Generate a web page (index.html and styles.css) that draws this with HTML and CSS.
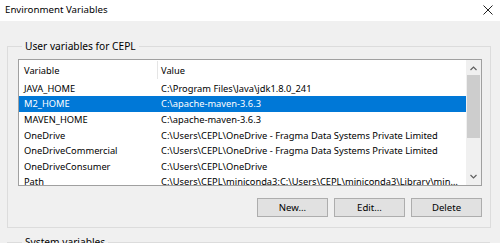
FILE: index.html
```html
<!DOCTYPE html>
<html>
<head>
<meta charset="utf-8">
<link rel="stylesheet" href="styles.css">
</head>
<body>
<div class="window">
  <div class="titlebar">
    <span class="title">Environment Variables</span>
    <svg class="close" width="10" height="10" viewBox="0 0 10 10"><path d="M0.5 0.5 L9.5 9.5 M9.5 0.5 L0.5 9.5" stroke="#222" stroke-width="1" fill="none"/></svg>
  </div>
  <div class="content">
    <fieldset class="group">
      <legend class="legend">User variables for CEPL</legend>
      <div class="listbox">
        <div class="list">
          <div class="row header"><span class="c1">Variable</span><span class="c2">Value</span></div>
          <div class="row"><span class="c1">JAVA_HOME</span><span class="c2">C:\Program Files\Java\jdk1.8.0_241</span></div>
          <div class="row selected"><span class="c1">M2_HOME</span><span class="c2">C:\apache-maven-3.6.3</span></div>
          <div class="row"><span class="c1">MAVEN_HOME</span><span class="c2">C:\apache-maven-3.6.3</span></div>
          <div class="row"><span class="c1">OneDrive</span><span class="c2">C:\Users\CEPL\OneDrive - Fragma Data Systems Private Limited</span></div>
          <div class="row"><span class="c1">OneDriveCommercial</span><span class="c2">C:\Users\CEPL\OneDrive - Fragma Data Systems Private Limited</span></div>
          <div class="row"><span class="c1">OneDriveConsumer</span><span class="c2">C:\Users\CEPL\OneDrive</span></div>
          <div class="row"><span class="c1">Path</span><span class="c2">C:\Users\CEPL\miniconda3;C:\Users\CEPL\miniconda3\Library\mingw-w64\bin</span></div>
        </div>
        <div class="scrollbar">
          <svg class="arrow" width="7" height="5" viewBox="0 0 7 5"><path d="M0.5 4 L3.5 1 L6.5 4" stroke="#606060" stroke-width="1.2" fill="none"/></svg>
          <div class="track"><div class="thumb"></div></div>
          <svg class="arrow" width="7" height="5" viewBox="0 0 7 5"><path d="M0.5 1 L3.5 4 L6.5 1" stroke="#606060" stroke-width="1.2" fill="none"/></svg>
        </div>
      </div>
      <div class="buttons">
        <button class="btn">New...</button>
        <button class="btn">Edit...</button>
        <button class="btn">Delete</button>
      </div>
    </fieldset>
    <fieldset class="group system">
      <legend class="legend">System variables</legend>
    </fieldset>
  </div>
</div>
</body>
</html>
```
FILE: styles.css
```css
* { box-sizing: border-box; }
html, body { margin: 0; padding: 0; }
body {
  width: 500px;
  height: 243px;
  overflow: hidden;
  background: #f0f0f0;
  font-family: "Noto Sans", "Open Sans", sans-serif;
  font-size: 9.3px;
  color: #000;
}
.window { width: 500px; height: 243px; overflow: hidden; }
.titlebar {
  height: 21px;
  background: #fff;
  display: flex;
  align-items: center;
  justify-content: space-between;
  padding: 0 7px 3px 5px;
}
.title { font-size: 9.7px; color: #000; }
.close { display: block; margin-top: 1px; }
.content { padding: 19px 10px 0 7px; }
.group {
  margin: 0;
  padding: 6px 8px 0 10px;
  border: 1px solid #dcdcdc;
  height: 188px;
  width: 483px;
}
.legend {
  padding: 0 3px;
  margin-left: 4px;
  font-size: 10.2px;
  line-height: 13px;
}
.listbox {
  width: 464px;
  height: 127px;
  border: 1px solid #a0a0a0;
  background: #fff;
  display: flex;
}
.list { flex: 1; overflow: hidden; min-width: 0; }
.row {
  display: flex;
  height: 15.6px;
  align-items: center;
  white-space: nowrap;
}
.row.header { height: 20.5px; }
.c1 { width: 138px; padding-left: 5px; flex: none; }
.c2 {
  flex: 1;
  min-width: 0;
  padding-left: 4px;
  padding-right: 8px;
  overflow: hidden;
  text-overflow: ellipsis;
}
.header .c2 { border-left: 1px solid #e5e5e5; padding-left: 3px; height: 18px; display: flex; align-items: center; }
.row.selected { background: #0078d7; color: #fff; }
.scrollbar {
  width: 15px;
  flex: none;
  background: #f0f0f0;
  display: flex;
  flex-direction: column;
  align-items: center;
  padding: 6px 0 6px;
}
.arrow { display: block; flex: none; }
.track { flex: 1; width: 100%; padding: 4px 1px; }
.thumb { width: 100%; height: 63px; background: #cdcdcd; }
.buttons {
  display: flex;
  justify-content: flex-end;
  gap: 6px;
  width: 464px;
  margin-top: 12px;
}
.btn {
  width: 71px;
  height: 19px;
  background: #e1e1e1;
  border: 1px solid #adadad;
  font-family: inherit;
  font-size: 9.6px;
  color: #000;
  padding: 0;
}
.group.system { margin-top: 8px; height: 20px; }
```
